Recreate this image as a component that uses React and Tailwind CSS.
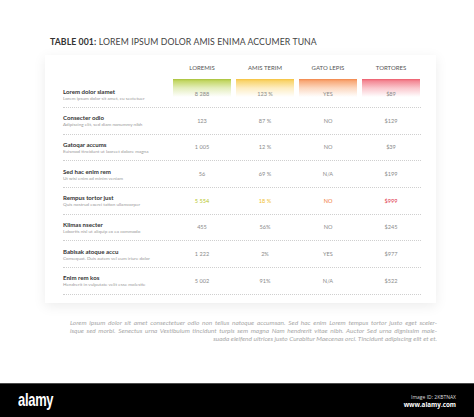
const columns = [
  { name: 'LOREMIS', bar: 'bg-[linear-gradient(to_bottom,#a9c23a_0px,#c3d765_2px,#e4eebd_9px,#ffffff_18px)]' },
  { name: 'AMIS TERIM', bar: 'bg-[linear-gradient(to_bottom,#f5c23e_0px,#f9d46d_2px,#fdedc2_9px,#ffffff_18px)]' },
  { name: 'GATO LEPIS', bar: 'bg-[linear-gradient(to_bottom,#f2874a_0px,#f8a877_2px,#fcd8c0_9px,#ffffff_18px)]' },
  { name: 'TORTORES', bar: 'bg-[linear-gradient(to_bottom,#ec5c6c_0px,#f38894_2px,#fac7cd_9px,#ffffff_18px)]' },
];

const rows = [
  { title: 'Lorem dolor slamet', sub: 'Lorem ipsum dolor sit amet, cu sectetuer', values: ['8 288', '123 %', 'YES', '$89'] },
  { title: 'Consecter odio', sub: 'Adipiscing elit, sed diam nonummy nibh', values: ['123', '87 %', 'NO', '$129'] },
  { title: 'Gatoqar accums', sub: 'Euismod tincidunt ut laoreet dolore magna', values: ['1 005', '12 %', 'NO', '$39'] },
  { title: 'Sed hac enim rem', sub: 'Ut wisi enim ad minim veniam', values: ['56', '69 %', 'N/A', '$199'] },
  { title: 'Rempus tortor just', sub: 'Quis nostrud exerci tation ullamcorper', values: ['5 554', '18 %', 'NO', '$999'], highlight: true },
  { title: 'Klimas nsecter', sub: 'Lobortis nisl ut aliquip ex ea commodo', values: ['455', '56%', 'NO', '$245'] },
  { title: 'Babisak atoque accu', sub: 'Consequat. Duis autem vel eum iriure dolor', values: ['1 222', '2%', 'YES', '$977'] },
  { title: 'Enim rem kos', sub: 'Hendrerit in vulputate velit esse molestie', values: ['5 002', '91%', 'N/A', '$522'] },
];

const highlightColors = ['text-[#b5c62a]', 'text-[#f0c030]', 'text-[#f07a3a]', 'text-[#e0384a]'];

const App = () => {
  return (
    <div className="w-[474px] h-[417px] bg-white flex flex-col font-['Lato',sans-serif] overflow-hidden">
      {/* Title */}
      <div className="pt-[37px] pl-[50px] text-[8.7px] leading-[10px] text-[#444] tracking-[0.1px]">
        <span className="font-bold text-[#333]">TABLE 001:</span> LOREM IPSUM DOLOR AMIS ENIMA ACCUMER TUNA
      </div>

      {/* Card */}
      <div className="mt-[8px] ml-[45px] w-[391px] bg-white shadow-[0_3px_12px_rgba(0,0,0,0.08)] pl-[18px] pr-[15px] pb-[8px]">
        <div className="grid grid-cols-[105px_58px_58px_58px_58px] gap-x-[5px] h-[24px] items-center">
          <div />
          {columns.map(col => (
            <div key={col.name} className="text-center text-[6px] text-[#555] pt-[1px]">{col.name}</div>
          ))}
        </div>

        {rows.map((row, i) => (
          <div
            key={row.title}
            className={`grid grid-cols-[105px_58px_58px_58px_58px] gap-x-[5px] border-b border-dotted border-[#cfcfcf] ${i === 0 ? 'h-[29px]' : 'h-[26.7px]'}`}
          >
            <div className={`flex flex-col justify-center ${i === 0 ? 'pt-[3px]' : ''}`}>
              <div className="text-[6.1px] leading-[7px] font-bold text-[#333] whitespace-nowrap">{row.title}</div>
              <div className="text-[4.6px] leading-[6px] text-[#9a9a9a] whitespace-nowrap">{row.sub}</div>
            </div>
            {row.values.map((v, j) => (
              <div
                key={j}
                className={`flex items-center justify-center text-[5.6px] ${i === 0 ? `pt-[3px] ${columns[j].bar}` : ''} ${row.highlight ? highlightColors[j] : 'text-[#8a8a8a]'}`}
              >
                {v}
              </div>
            ))}
          </div>
        ))}
      </div>

      {/* Footnote */}
      <div className="mt-[16px] ml-[70px] w-[367px] italic text-[6.5px] leading-[8px] text-[#a8a8a8] whitespace-nowrap">
        <div className="text-justify [text-align-last:justify]">Lorem ipsum dolor sit amet consectetuer odio non tellus natoque accumsan. Sed hac enim Lorem tempus tortor justo eget sceler-</div>
        <div className="text-justify [text-align-last:justify]">isque sed morbi. Senectus urna Vestibulum tincidunt turpis sem magna Nam hendrerit vitae nibh. Auctor Sed urna dignissim male-</div>
        <div className="text-right">suada eleifend ultrices justo Curabitur Maecenas orci. Tincidunt adipiscing elit et et.</div>
      </div>

      {/* Bottom bar */}
      <div className="mt-auto h-[34px] bg-black border-t border-[#4a4a4a] flex items-center justify-between pl-[18px] pr-[18px]">
        <div className="text-white font-bold text-[19px] leading-none tracking-[-0.4px] font-['Liberation_Sans',sans-serif] [transform:scaleX(0.68)] origin-left -mt-[2px]">alamy</div>
        <div className="flex flex-col items-end text-white font-['Open_Sans',sans-serif]">
          <div className="text-[5px] leading-[8px] text-[#ddd]">Image ID: 2KBTNAX</div>
          <div className="text-[6.3px] leading-[8px] font-bold">www.alamy.com</div>
        </div>
      </div>
    </div>
  );
};

export default App;
